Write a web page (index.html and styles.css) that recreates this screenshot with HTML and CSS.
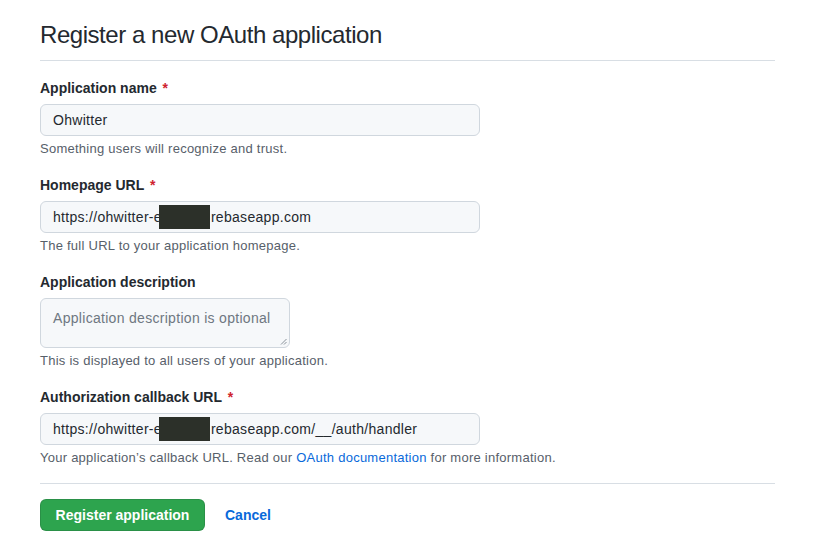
FILE: index.html
```html
<!DOCTYPE html>
<html>
<head>
<meta charset="utf-8">
<link rel="stylesheet" href="styles.css">
</head>
<body>
<div class="page">
  <h1 class="title">Register a new OAuth application</h1>
  <form class="form">
    <div class="group">
      <label class="label">Application name <span class="req">*</span></label>
      <div class="input"><span>Ohwitter</span></div>
      <p class="note">Something users will recognize and trust.</p>
    </div>
    <div class="group">
      <label class="label">Homepage URL <span class="req">*</span></label>
      <div class="input"><span>https://ohwitter-e</span><span class="redact"></span><span>rebaseapp.com</span></div>
      <p class="note">The full URL to your application homepage.</p>
    </div>
    <div class="group">
      <label class="label">Application description</label>
      <div class="textarea"><span class="placeholder">Application description is optional</span>
        <svg class="grip" width="7" height="7" viewBox="0 0 7 7"><path d="M6.5 1 L1 6.5 M6.5 4 L4 6.5" stroke="#6e7781" stroke-width="0.8" fill="none"/></svg>
      </div>
      <p class="note">This is displayed to all users of your application.</p>
    </div>
    <div class="group">
      <label class="label">Authorization callback URL <span class="req">*</span></label>
      <div class="input"><span>https://ohwitter-e</span><span class="redact"></span><span>rebaseapp.com/__/auth/handler</span></div>
      <p class="note">Your application’s callback URL. Read our <a class="link">OAuth documentation</a> for more information.</p>
    </div>
    <div class="actions">
      <button type="button" class="btn">Register application</button>
      <a class="cancel">Cancel</a>
    </div>
  </form>
</div>
</body>
</html>
```
FILE: styles.css
```css
* { box-sizing: border-box; }
html, body { margin: 0; padding: 0; background: #ffffff; }
body {
  font-family: "Liberation Sans", Arial, sans-serif;
  color: #24292f;
  font-size: 14px;
}
.page {
  padding: 0 40px;
  width: 815px;
}
.title {
  margin: 0;
  padding: 22px 0 12px;
  font-size: 24px;
  font-weight: 400;
  line-height: 26px;
  letter-spacing: -0.45px;
  border-bottom: 1px solid #d8dee4;
  width: 735px;
}
.form { margin: 0; }
.group { margin-top: 17px; }
.label {
  display: block;
  font-weight: 700;
  font-size: 14px;
  line-height: 20px;
  height: 20px;
}
.req { color: #cf222e; margin-left: 2px; }
.input {
  margin-top: 6px;
  width: 440px;
  height: 32px;
  background: #f6f8fa;
  border: 1px solid #d0d7de;
  border-radius: 6px;
  padding: 0 12px;
  display: flex;
  align-items: center;
  font-size: 14px;
  letter-spacing: 0.3px;
  white-space: nowrap;
}
.redact {
  display: inline-block;
  width: 51px;
  height: 24px;
  background: #2c3029;
  margin-left: -3px;
  margin-right: 1px;
}
.textarea {
  position: relative;
  margin-top: 6px;
  width: 250px;
  height: 50px;
  background: #f6f8fa;
  border: 1px solid #d0d7de;
  border-radius: 6px;
  padding: 9px 12px;
  font-size: 14px;
  line-height: 20px;
  letter-spacing: 0.3px;
}
.placeholder { color: #6e7781; }
.grip { position: absolute; right: 2px; bottom: 2px; }
.note {
  margin: 4px 0 0;
  font-size: 13px;
  line-height: 18px;
  letter-spacing: 0.25px;
  color: #57606a;
}
.link { color: #0969da; text-decoration: none; }
.actions {
  margin-top: 16px;
  border-top: 1px solid #d8dee4;
  width: 735px;
  padding-top: 15px;
  display: flex;
  align-items: center;
  gap: 20px;
}
.btn {
  height: 32px;
  width: 165px;
  background: #2da44e;
  color: #ffffff;
  font-family: "Liberation Sans", Arial, sans-serif;
  font-size: 14px;
  font-weight: 700;
  white-space: nowrap;
  border: 1px solid rgba(27,31,36,0.15);
  border-radius: 6px;
  padding: 0;
  text-align: center;
}
.cancel {
  color: #0969da;
  font-weight: 700;
  font-size: 14px;
}
```
